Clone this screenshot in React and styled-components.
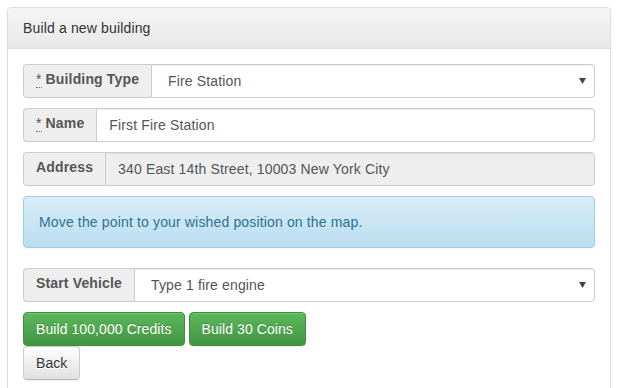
import React from "react";
import styled, { createGlobalStyle } from "styled-components";

const Global = createGlobalStyle`
  html, body { margin: 0; padding: 0; background: #fff; }
  body {
    padding: 7px 8px 0 7px;
    font-family: "Liberation Sans", Arial, sans-serif;
    font-size: 14px;
    line-height: 20px;
    letter-spacing: 0.15px;
    color: #333;
  }
  * { box-sizing: border-box; }
`;

const Panel = styled.div`
  border: 1px solid #ddd;
  border-radius: 4px;
  background: #fff;
  box-shadow: 0 1px 2px rgba(0, 0, 0, 0.05);
`;

const PanelHeading = styled.div`
  padding: 10px 15px;
  border-bottom: 1px solid #ddd;
  border-radius: 3px 3px 0 0;
  background: linear-gradient(to bottom, #f5f5f5 0%, #e8e8e8 100%);
  color: #333;
  line-height: 20px;
`;

const PanelBody = styled.div`
  padding: 15px;
  display: flex;
  flex-direction: column;
  align-items: stretch;
`;

const InputGroup = styled.div`
  display: flex;
  height: 34px;
  margin-bottom: ${(p) => p.$mb || 10}px;
`;

const Addon = styled.div`
  display: flex;
  align-items: center;
  padding: 6px 12px;
  background: #eee;
  border: 1px solid #ccc;
  border-right: 0;
  border-radius: 4px 0 0 4px;
  color: #555;
  line-height: 1;
  white-space: nowrap;
`;

const Label = styled.label`
  display: inline-block;
  margin-bottom: 5px;
  font-weight: bold;
  line-height: 1;
`;

const Req = styled.abbr`
  text-decoration: none;
  border-bottom: 1px dotted #777;
  font-weight: normal;
  margin-right: 4px;
  cursor: help;
`;

const Field = styled.div`
  flex: 1;
  position: relative;
  display: flex;
  align-items: center;
  padding: 6px 12px 6px ${(p) => (p.$select ? 16 : 12)}px;
  border: 1px solid #ccc;
  border-radius: 0 4px 4px 0;
  background: ${(p) => (p.$disabled ? "#eee" : "#fff")};
  box-shadow: inset 0 1px 1px rgba(0, 0, 0, 0.075);
  color: #555;
  line-height: 20px;
`;

const Arrow = styled.svg`
  position: absolute;
  right: 8px;
  top: 50%;
  margin-top: -3px;
`;

const Alert = styled.div`
  padding: 15px;
  margin-bottom: 20px;
  border: 1px solid #9acfea;
  border-radius: 4px;
  background: linear-gradient(to bottom, #d9edf7 0%, #b9def0 100%);
  color: #31708f;
  box-shadow: inset 0 1px 0 rgba(255, 255, 255, 0.25), 0 1px 2px rgba(0, 0, 0, 0.05);
  line-height: 20px;
`;

const ButtonRow = styled.div`
  display: flex;
  gap: 4px;
  align-items: flex-start;
`;

const Btn = styled.button`
  display: inline-block;
  height: 34px;
  padding: 6px 12px;
  font-family: "Liberation Sans", Arial, sans-serif;
  font-size: 14px;
  line-height: 20px;
  letter-spacing: 0.08px;
  border-radius: 4px;
  cursor: pointer;
  white-space: nowrap;
  ${(p) =>
    p.$variant === "success"
      ? `
    color: #fff;
    background: linear-gradient(to bottom, #5cb85c 0%, #419641 100%);
    border: 1px solid #3e8f3e;
    text-shadow: 0 -1px 0 rgba(0, 0, 0, 0.2);
    box-shadow: inset 0 1px 0 rgba(255,255,255,.15), 0 1px 1px rgba(0,0,0,.075);
  `
      : `
    color: #333;
    background: linear-gradient(to bottom, #fff 0%, #e0e0e0 100%);
    border: 1px solid #ccc;
    border-bottom-color: #bbb;
    text-shadow: 0 1px 0 #fff;
    box-shadow: inset 0 1px 0 rgba(255,255,255,.15), 0 1px 1px rgba(0,0,0,.075);
  `}
`;

const BackRow = styled.div`
  display: flex;
`;

const SelectArrow = () => (
  <Arrow width="7" height="6" viewBox="0 0 7 6">
    <path d="M0 0 H7 L3.5 6 Z" fill="#444" />
  </Arrow>
);

export default function App() {
  return (
    <>
      <Global />
      <Panel>
        <PanelHeading>Build a new building</PanelHeading>
        <PanelBody>
          <InputGroup>
            <Addon>
              <Label>
                <Req title="required">*</Req>Building Type
              </Label>
            </Addon>
            <Field $select>
              Fire Station
              <SelectArrow />
            </Field>
          </InputGroup>
          <InputGroup>
            <Addon>
              <Label>
                <Req title="required">*</Req>Name
              </Label>
            </Addon>
            <Field>First Fire Station</Field>
          </InputGroup>
          <InputGroup>
            <Addon>
              <Label>Address</Label>
            </Addon>
            <Field $disabled>340 East 14th Street, 10003 New York City</Field>
          </InputGroup>
          <Alert>Move the point to your wished position on the map.</Alert>
          <InputGroup>
            <Addon>
              <Label>Start Vehicle</Label>
            </Addon>
            <Field $select>
              Type 1 fire engine
              <SelectArrow />
            </Field>
          </InputGroup>
          <ButtonRow>
            <Btn $variant="success">Build 100,000 Credits</Btn>
            <Btn $variant="success">Build 30 Coins</Btn>
          </ButtonRow>
          <BackRow>
            <Btn>Back</Btn>
          </BackRow>
        </PanelBody>
      </Panel>
    </>
  );
}
